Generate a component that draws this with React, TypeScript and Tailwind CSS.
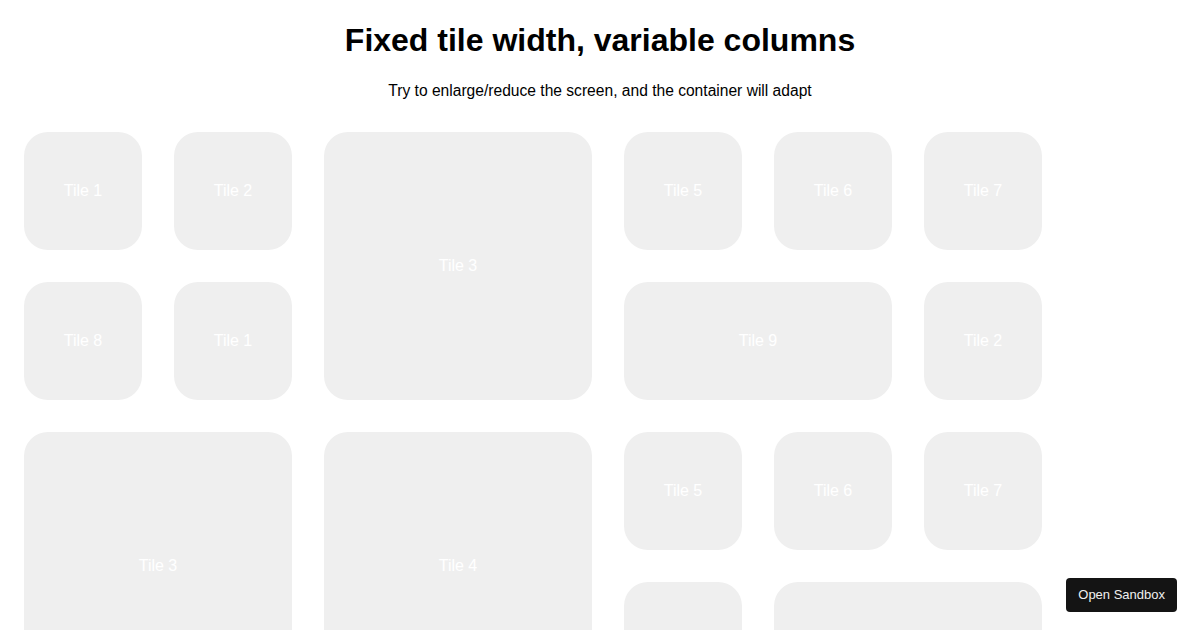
import React from 'react';

type Tile = { label: string; size?: 'big' | 'wide' };

const tiles: Tile[] = [
  { label: 'Tile 1' },
  { label: 'Tile 2' },
  { label: 'Tile 3', size: 'big' },
  { label: 'Tile 5' },
  { label: 'Tile 6' },
  { label: 'Tile 7' },
  { label: 'Tile 8' },
  { label: 'Tile 1' },
  { label: 'Tile 9', size: 'wide' },
  { label: 'Tile 2' },
  { label: 'Tile 3', size: 'big' },
  { label: 'Tile 4', size: 'big' },
  { label: 'Tile 5' },
  { label: 'Tile 6' },
  { label: 'Tile 7' },
  { label: 'Tile 8' },
  { label: 'Tile 9', size: 'wide' },
];

const sizeClass = {
  big: 'col-span-2 row-span-2',
  wide: 'col-span-2',
};

export default function App() {
  return (
    <div className="min-h-screen bg-white font-['Liberation_Sans',Arial,sans-serif] text-black">
      <h1 className="pt-[22px] text-center text-[32px] font-bold leading-[37px]">
        Fixed tile width, variable columns
      </h1>
      <p className="mt-[23px] text-center text-[15.6px] leading-[18px]">
        Try to enlarge/reduce the screen, and the container will adapt
      </p>

      {/* auto-fill grid of fixed 118px tiles */}
      <div className="mt-[32px] grid grid-cols-[repeat(auto-fill,118px)] auto-rows-[118px] gap-8 px-6 pb-8">
        {tiles.map((t, i) => (
          <div
            key={i}
            className={`flex items-center justify-center rounded-[24px] bg-[#efefef] text-base text-white ${t.size ? sizeClass[t.size] : ''}`}
          >
            {t.label}
          </div>
        ))}
      </div>

      <button className="fixed bottom-[18px] right-[23px] h-[34px] rounded-[4px] bg-[#141414] px-[12px] text-[13px] text-[#f0f0f0]">
        Open Sandbox
      </button>
    </div>
  );
}
